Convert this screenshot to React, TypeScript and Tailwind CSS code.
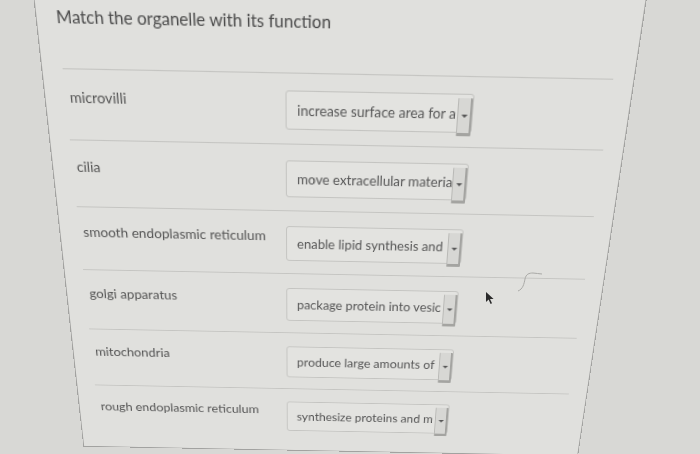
import React from 'react';

// the selects show their chosen answer cut short, as in the screenshot
const rows = [
  { label: 'microvilli', answer: 'increase surface area for a' },
  { label: 'cilia', answer: 'move extracellular materia' },
  { label: 'smooth endoplasmic reticulum', answer: 'enable lipid synthesis and' },
  { label: 'golgi apparatus', answer: 'package protein into vesic' },
  { label: 'mitochondria', answer: 'produce large amounts of' },
  { label: 'rough endoplasmic reticulum', answer: 'synthesize proteins and m' },
];

function Dropdown({ value }: { value: string }) {
  return (
    <div className="flex h-[36px] w-[178px] items-stretch rounded-[3px] border border-[#c4c4c1] bg-[#e3e3e0]">
      <div className="flex min-w-0 flex-1 items-center overflow-hidden whitespace-nowrap pl-[10px] text-[13.2px] leading-[20px] text-[#575757]">
        {value}
      </div>
      <div className="-mb-[4px] mt-[3px] flex w-[14px] shrink-0 items-center justify-center rounded-[1px] border-b-[3px] border-l border-r-2 border-b-[#a4a4a1] border-l-[#b9b9b6] border-r-[#a4a4a1] bg-[#d7d7d4]">
        <span className="block h-0 w-0 border-x-[3px] border-t-[3px] border-x-transparent border-t-[#555]" />
      </div>
    </div>
  );
}

export default function App() {
  return (
    <div className="relative h-[454px] w-[700px] overflow-hidden bg-[#d8d8d5] font-['Lato',sans-serif]">
      <div className="ml-[58px] w-[554px] origin-[277px_225px] border-x border-b border-[#a2a2a0] bg-[#e0e0dd] pb-[11px] [transform:rotate(1.1deg)_perspective(400px)_rotateX(-10.7deg)]">
        <h1 className="pl-[18px] pb-[33px] pt-[24px] text-[15.5px] font-normal leading-[24px] text-[#4a4a4a]">
          Match the organelle with its function
        </h1>
        {rows.map((r) => (
          <div
            key={r.label}
            className="mx-[19px] flex items-start border-t border-[#c5c5c2] pb-[13px] pt-[15px]"
          >
            <div className="w-[208px] pl-[4px] text-[13.7px] leading-[20px] text-[#555]">{r.label}</div>
            <Dropdown value={r.answer} />
          </div>
        ))}
      </div>

      {/* mouse pointer */}
      <svg className="absolute left-[485px] top-[291px]" width="10" height="14" viewBox="0 0 10 14">
        <path d="M1 1 L1 11 L3.6 8.6 L5.6 13 L7 12.3 L5 8 L8.6 8 Z" fill="#2a2a2a" />
      </svg>

      {/* smudge on the screen */}
      <svg className="absolute left-[514px] top-[268px]" width="32" height="26" viewBox="0 0 32 26">
        <path d="M4 23 C9 21 10 16 11 11 C12 6 15 5 19 5 C22 5 25 6 28 6" fill="none" stroke="#a9a9a6" strokeWidth="1" />
      </svg>
    </div>
  );
}
